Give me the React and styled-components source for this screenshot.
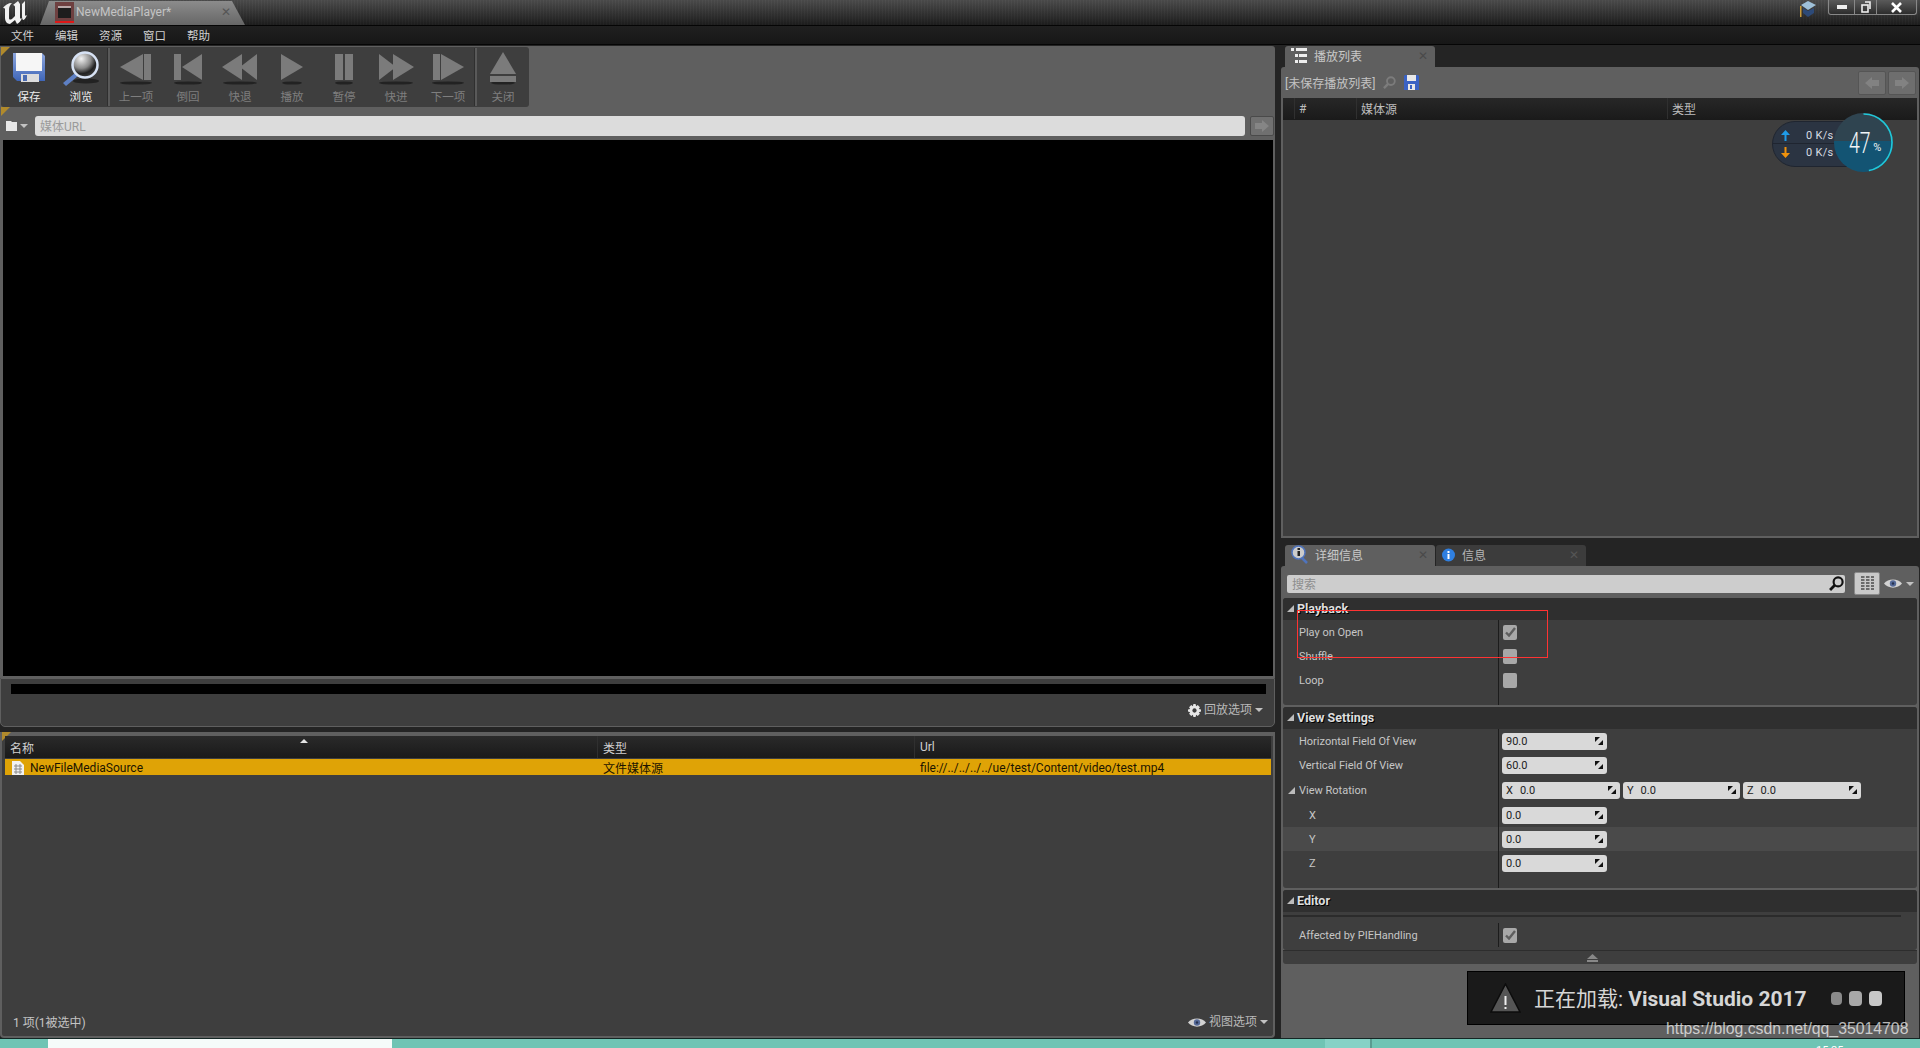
import styled, { createGlobalStyle } from 'styled-components'

const GlobalStyle = createGlobalStyle`
    html, body {
        margin: 0;
        padding: 0;
        background: #242424;
        font-family: Roboto, "Noto Sans CJK SC", sans-serif;
        overflow: hidden;
    }
    * { box-sizing: border-box; }
`

const Page = styled.div`
    position: relative;
    width: 1920px;
    height: 1048px;
    display: flex;
    flex-direction: column;
    overflow: hidden;
`

const TitleBar = styled.div`
    height: 26px;
    flex: none;
    display: flex;
    align-items: flex-end;
    padding-left: 2px;
    background: repeating-linear-gradient(90deg, #ffffff05 0 1px, #00000008 1px 3px), linear-gradient(#4c4c4c, #1d1d1d);
    border-bottom: 1px solid #050505;
`

const LogoBox = styled.div`
    width: 35px;
    height: 25px;
    flex: none;
`

const DocTab = styled.div`
    width: 205px;
    height: 24px;
    margin-left: 3px;
    display: flex;
    align-items: center;
    padding: 0 14px 2px 15px;
    gap: 2px;
    color: #c4c4c4;
    font-size: 12px;
    background: linear-gradient(#8c8c8c, #666);
    clip-path: polygon(9px 0, 192px 0, 205px 100%, 0 100%);
`

const TabName = styled.span`
    flex: 1;
`

const CloseMark = styled.span`
    color: ${(p) => p.$color || '#777'};
    font-size: 12px;
    line-height: 1;
`

const WindowButtons = styled.div`
    margin-left: auto;
    align-self: flex-start;
    display: flex;
    align-items: flex-start;
    gap: 12px;
    padding-right: 3px;
`

const WinGroup = styled.div`
    display: flex;
    height: 15px;
    border: 1px solid #888;
    border-top: 0;
    border-radius: 0 0 3px 3px;
    background: linear-gradient(#5a5a5a, #2d2d2d);
`

const WinButton = styled.div`
    width: ${(p) => p.$w}px;
    display: flex;
    align-items: center;
    justify-content: center;
    border-left: ${(p) => (p.$first ? 0 : '1px solid #888')};
`

const MenuBar = styled.div`
    height: 19px;
    flex: none;
    display: flex;
    align-items: center;
    padding: 0 0 1px 11px;
    gap: 21px;
    color: #cfcfcf;
    font-size: 11.5px;
    background: linear-gradient(#202020, #171717);
    border-bottom: 1px solid #050505;
`

const Workspace = styled.div`
    height: 993px;
    flex: none;
    display: flex;
    gap: 6px;
    background: #242424;
`

const LeftColumn = styled.div`
    width: 1275px;
    flex: none;
    display: flex;
    flex-direction: column;
`

const PlayerArea = styled.div`
    height: 632px;
    flex: none;
    margin-top: 1px;
    padding: 1px 1px 0 1px;
    display: flex;
    flex-direction: column;
    background: #5f5f5f;
    border-radius: 0 3px 0 0;
`

const Corner = styled.i`
    position: absolute;
    top: 0;
    left: 0;
    width: 0;
    height: 0;
    border-top: 9px solid #b08a2c;
    border-right: 9px solid transparent;
`

const Toolbar = styled.div`
    position: relative;
    width: 528px;
    height: 60px;
    flex: none;
    display: flex;
    padding-left: 2px;
    background: #3e3e3e;
    border-radius: 3px;
`

const ToolButton = styled.div`
    width: 52px;
    flex: none;
    display: flex;
    flex-direction: column;
    align-items: center;
    padding-top: 5px;
    gap: 5px;
    font-size: 11.5px;
    line-height: 14px;
    color: ${(p) => (p.$active ? '#ececec' : '#7e7e7e')};
`

const ToolIcon = styled.div`
    height: 33px;
    display: flex;
    align-items: center;
    justify-content: center;
`

const ToolDivider = styled.div`
    width: 3px;
    flex: none;
    margin: 1px 0;
    background: #595959;
    border-left: 1px solid #2f2f2f;
`

const UrlRow = styled.div`
    position: relative;
    height: 33px;
    flex: none;
    padding: 9px 0 4px 2px;
    display: flex;
    align-items: stretch;
    gap: 5px;
`

const FolderBtn = styled.div`
    width: 27px;
    flex: none;
    display: flex;
    align-items: center;
    gap: 2px;
    padding-left: 3px;
`

const Caret = styled.span`
    width: 0;
    height: 0;
    flex: none;
    border-left: 4px solid transparent;
    border-right: 4px solid transparent;
    border-top: 4px solid #c2c2c2;
`

const UrlInput = styled.div`
    flex: 1;
    display: flex;
    align-items: center;
    padding: 0 0 2px 5px;
    font-size: 12px;
    color: #9a9a9a;
    background: #dcdcdc;
    border-radius: 3px;
`

const GoButton = styled.div`
    width: 24px;
    flex: none;
    display: flex;
    align-items: center;
    justify-content: center;
    background: #707070;
    border: 1px solid #4a4a4a;
    border-radius: 2px;
`

const Video = styled.div`
    height: 536px;
    flex: none;
    margin-left: 2px;
    margin-right: 1px;
    background: #000;
`

const SeekPanel = styled.div`
    height: 49px;
    flex: none;
    padding: 5px 8px 0 10px;
    background: #3e3e3e;
    border: 1px solid #5f5f5f;
    border-radius: 0 0 5px 5px;
`

const SeekBar = styled.div`
    height: 10px;
    background: #000;
`

const OptionLink = styled.div`
    display: flex;
    justify-content: flex-end;
    align-items: center;
    gap: 3px;
    padding-right: ${(p) => p.$pr || 0}px;
    font-size: 12px;
    line-height: 14px;
    color: #b9b9b9;
`

const SeekOptions = styled(OptionLink)`
    margin-top: 9px;
`

const ListPanel = styled.div`
    position: relative;
    height: 306px;
    flex: none;
    margin-top: 5px;
    padding: 4px 2px 2px 3px;
    display: flex;
    flex-direction: column;
    background: #3e3e3e;
    border: 2px solid #5f5f5f;
    border-top: 0;
    border-radius: 0 0 4px 4px;
    box-shadow: inset 0 4px 0 #5f5f5f;
`

const ListHeader = styled.div`
    position: relative;
    height: 22px;
    flex: none;
    display: grid;
    grid-template-columns: 592px 317px 1fr;
    background: linear-gradient(#2a2a2a, #1a1a1a);
    font-size: 12px;
    color: #d0d0d0;
`

const HeaderCell = styled.div`
    display: flex;
    align-items: center;
    padding-left: ${(p) => p.$pl || 5}px;
    border-left: ${(p) => (p.$first ? 0 : '1px solid #303030')};
`

const SortMark = styled.i`
    position: absolute;
    left: 295px;
    top: 3px;
    width: 0;
    height: 0;
    border-left: 4px solid transparent;
    border-right: 4px solid transparent;
    border-bottom: 4px solid #e4e4e4;
`

const SelectedRow = styled.div`
    height: 16px;
    flex: none;
    display: grid;
    grid-template-columns: 592px 317px 1fr;
    align-items: center;
    margin-top: 1px;
    padding-bottom: 1px;
    background: #dfa306;
    font-size: 12px;
    color: #1c1400;
`

const NameCell = styled.div`
    display: flex;
    align-items: center;
    gap: 6px;
    padding-left: 7px;
`

const RowCell = styled.div`
    padding-left: 6px;
`

const ListFooter = styled.div`
    margin-top: auto;
    height: 19px;
    display: flex;
    align-items: flex-start;
    justify-content: space-between;
    padding: 0 3px 0 8px;
    font-size: 12px;
    line-height: 16px;
    color: #c4c4c4;
`

const RightColumn = styled.div`
    flex: 1;
    display: flex;
    flex-direction: column;
    padding-top: 1px;
    padding-right: 1px;
`

const TabStrip = styled.div`
    height: 21px;
    flex: none;
    display: flex;
    gap: 1px;
    padding-left: 4px;
`

const DockTab = styled.div`
    width: 150px;
    display: flex;
    align-items: center;
    gap: 7px;
    padding: 0 7px 2px 6px;
    font-size: 12px;
    color: ${(p) => (p.$active ? '#c9c9c9' : '#b6b6b6')};
    background: ${(p) => (p.$active ? '#5f5f5f' : '#3c3c3c')};
    border-radius: 3px 3px 0 0;
`

const Panel = styled.div`
    background: #5f5f5f;
    border-radius: 3px 3px 0 0;
    padding: 0 2px 2px 2px;
    display: flex;
    flex-direction: column;
`

const PlaylistPanel = styled(Panel)`
    height: 471px;
    flex: none;
`

const PlaylistBar = styled.div`
    height: 31px;
    flex: none;
    display: flex;
    align-items: center;
    gap: 8px;
    padding: 0 1px 0 2px;
    font-size: 12px;
    color: #c4c4c4;
`

const NavGroup = styled.div`
    margin-left: auto;
    display: flex;
    gap: 2px;
`

const NavButton = styled.div`
    width: 28px;
    height: 24px;
    display: flex;
    align-items: center;
    justify-content: center;
    background: #6e6e6e;
    border: 1px solid #555;
    border-radius: 2px;
`

const PlaylistHeader = styled.div`
    height: 22px;
    flex: none;
    display: grid;
    grid-template-columns: 11px 62px 311px 1fr;
    padding-bottom: 1px;
    background: linear-gradient(#272727, #1a1a1a);
    font-size: 12px;
    color: #bdbdbd;
`

const PlaylistCell = styled.div`
    display: flex;
    align-items: center;
    padding-left: 4px;
    border-left: ${(p) => (p.$first ? 0 : '1px solid #303030')};
`

const PlaylistBody = styled.div`
    flex: 1;
    background: #3e3e3e;
`

const DetailsStrip = styled(TabStrip)`
    margin-top: 7px;
`

const DetailsPanel = styled(Panel)`
    flex: 1;
`

const SearchRow = styled.div`
    height: 32px;
    flex: none;
    display: flex;
    align-items: center;
    padding: 3px 0 0 4px;
`

const SearchInput = styled.div`
    width: 558px;
    height: 18px;
    display: flex;
    align-items: center;
    justify-content: space-between;
    padding: 0 1px 0 5px;
    font-size: 12px;
    color: #8e8e8e;
    background: #cdcdcd;
    border-radius: 2px;
`

const GridToggle = styled.div`
    width: 26px;
    height: 23px;
    flex: none;
    margin-left: 9px;
    display: flex;
    align-items: center;
    justify-content: center;
    background: #c9c9c9;
    border: 1px solid #8a8a8a;
    border-radius: 2px;
`

const EyeMenu = styled.div`
    display: flex;
    align-items: center;
    gap: 4px;
    margin-left: 4px;
`

const Section = styled.div`
    height: ${(p) => p.$h}px;
    flex: none;
    margin-bottom: 2px;
    display: flex;
    flex-direction: column;
    background: #3e3e3e;
    border-radius: 3px;
    overflow: hidden;
`

const SectionHeader = styled.div`
    height: 22px;
    flex: none;
    display: flex;
    align-items: center;
    gap: 3px;
    padding: 0 0 2px 4px;
    font-size: 12.5px;
    font-weight: 700;
    color: #dedede;
    text-shadow: 1px 1px 0 #000;
    background: #2f2f2f;
`

const Fold = styled.i`
    width: 0;
    height: 0;
    flex: none;
    border-left: 7px solid transparent;
    border-bottom: 7px solid #bcbcbc;
`

const Row = styled.div`
    height: ${(p) => p.$h || 24}px;
    flex: none;
    display: flex;
    align-items: center;
    background: ${(p) => (p.$stripe ? '#4a4a4a' : 'transparent')};
`

const RowLabel = styled.div`
    width: 216px;
    height: 100%;
    flex: none;
    display: flex;
    align-items: center;
    gap: 4px;
    padding-left: ${(p) => p.$pl || 16}px;
    font-size: 11px;
    color: #c6c6c6;
    border-right: 1px solid #1c1c1c;
`

const RowValue = styled.div`
    display: flex;
    align-items: center;
    gap: 3px;
    padding-left: 3px;
`

const CheckBox = styled.div`
    width: 14px;
    height: 15px;
    margin-left: 1px;
    display: flex;
    align-items: center;
    justify-content: center;
    background: #a8a8a8;
    border-radius: 2px;
`

const NumberInput = styled.div`
    width: ${(p) => p.$w || 105}px;
    height: 17px;
    display: flex;
    align-items: center;
    gap: 7px;
    padding: 0 4px;
    font-size: 11px;
    color: #222;
    background: #d9d9d9;
    border-radius: 3px;
`

const SpinIcon = styled.svg`
    margin-left: auto;
    flex: none;
`

const SectionRule = styled.div`
    height: 2px;
    flex: none;
    margin: 3px 16px 6px 0;
    background: #2b2b2b;
`

const CollapseStrip = styled.div`
    height: 14px;
    flex: none;
    display: flex;
    align-items: center;
    justify-content: center;
    padding-right: 16px;
    border-top: 1px solid #2d2d2d;
    background: #3e3e3e;
    border-radius: 0 0 3px 3px;
    margin-top: -2px;
`

const TaskStrip = styled.div`
    flex: 1;
    position: relative;
    overflow: hidden;
    background: #6fc4b4;
    border-top: 1px solid #142624;
`

const TaskWhite = styled.div`
    position: absolute;
    top: 0;
    bottom: 0;
    left: ${(p) => p.$l}px;
    width: ${(p) => p.$w}px;
    background: ${(p) => p.$c};
`

const Clock = styled.span`
    position: absolute;
    left: 1816px;
    top: 6px;
    font-size: 11px;
    line-height: 12px;
    color: #fff;
`

const RedMark = styled.div`
    position: absolute;
    left: 1297px;
    top: 610px;
    width: 251px;
    height: 48px;
    border: 1px solid #f33;
`

const Toast = styled.div`
    position: absolute;
    left: 1467px;
    top: 971px;
    width: 438px;
    height: 54px;
    display: flex;
    align-items: center;
    padding: 0 22px;
    gap: 13px;
    background: #1a1a1a;
    border: 1px solid #000;
    font-size: 21px;
    color: #d6d6d6;
`

const ToastText = styled.div`
    flex: 1;
    margin-bottom: 3px;
    white-space: nowrap;
`

const ToastStrong = styled.b`
    font-weight: 700;
`

const ToastDots = styled.div`
    display: flex;
    gap: 7px;
    align-items: center;
`

const ToastDot = styled.i`
    width: ${(p) => p.$s}px;
    height: ${(p) => p.$s + 2}px;
    border-radius: 4px;
    background: ${(p) => p.$c};
`

const Watermark = styled.div`
    position: absolute;
    left: 1666px;
    top: 1019px;
    font-family: "Liberation Sans", Arial, sans-serif;
    font-size: 15.8px;
    line-height: 20px;
    color: #ffffffb0;
    white-space: nowrap;
`

const NetWidget = styled.div`
    position: absolute;
    left: 1772px;
    top: 121px;
    width: 120px;
    height: 46px;
    padding-top: 5px;
    border-radius: 23px;
    background: #2b3442;
    border: 1px solid #1f2530;
    color: #d8dde2;
    font-size: 11px;
    letter-spacing: 0.3px;
`

const NetLine = styled.div`
    height: 17px;
    display: flex;
    align-items: center;
    padding-left: 8px;
    gap: 16px;
    border-bottom: ${(p) => (p.$top ? '1px solid #1f2530' : 0)};
`

const NetDial = styled.div`
    position: absolute;
    left: 61px;
    top: -9px;
    width: 59px;
    height: 59px;
    display: flex;
    align-items: center;
    justify-content: center;
    border-radius: 50%;
    background: linear-gradient(#2f4450 47%, #135473 47%);
    color: #f2f6f8;
`

const DialRing = styled.svg`
    position: absolute;
    inset: 0;
`

const DialNumber = styled.span`
    display: inline-block;
    width: 23px;
    margin-left: 4px;
    font-size: 30px;
    font-weight: 300;
    letter-spacing: 0;
    transform: scaleX(0.65);
    transform-origin: left center;
`

const DialPercent = styled.span`
    font-size: 11px;
    margin-top: 10px;
    margin-left: 1px;
`

const Logo = () => (
    <LogoBox>
        <svg width="26" height="24" viewBox="0 0 26 24" fill="#f1f1f1">
            <path d="M1 8 C3 5 6 3 10 3 C8 5 7 7 7 9 V18 C7 20 9 20 11 18 L13 16 V7 C13 6 12 5 11 5 L16 1 L18 4 V17 C18 19 19 19 20 18 C19 21 17 23 15 24 L13 20 L8 24 C5 24 3 21 3 18 V9 C3 8 2 8 1 8 Z" />
            <path d="M20 4 L23 1 V15 C23 16 24 16 25 15 C24 18 22 20 21 20 C20 19 20 17 20 15 Z" />
        </svg>
    </LogoBox>
)

const TabIcon = () => (
    <svg width="19" height="21" viewBox="0 0 19 21">
        <rect width="19" height="19" fill="#6e4040" />
        <rect x="3" y="4" width="13" height="2" fill="#b8a8a8" />
        <rect x="3" y="6" width="13" height="10" fill="#1d1d1d" />
        <rect y="19" width="19" height="2" fill="#e01818" />
    </svg>
)

const ToolShadow = ({ x = 14, w = 14 }) => <ellipse cx={x} cy="31" rx={w} ry="1.6" fill="#222" />

const SaveIcon = () => (
    <svg width="32" height="33" viewBox="0 0 32 33">
        <defs>
            <linearGradient id="flop" x1="0" y1="0" x2="0" y2="1">
                <stop offset="0" stopColor="#8da6dd" />
                <stop offset="1" stopColor="#3f66b8" />
            </linearGradient>
        </defs>
        <path d="M0 1 H29 L32 4 V29 H4 L0 25 Z" fill="url(#flop)" />
        <rect x="3" y="1" width="26" height="18" fill="#f6f6f6" />
        <rect x="8" y="22" width="18" height="8" fill="#dcdcdc" />
        <rect x="10" y="23" width="4" height="6" fill="#4a6bb2" />
    </svg>
)

const BrowseIcon = () => (
    <svg width="38" height="36" viewBox="0 0 38 36">
        <defs>
            <radialGradient id="glass" cx="0.35" cy="0.25" r="0.85">
                <stop offset="0" stopColor="#f2f2f2" />
                <stop offset="0.45" stopColor="#8a8a8a" />
                <stop offset="0.7" stopColor="#222" />
                <stop offset="1" stopColor="#4a4a4a" />
            </radialGradient>
        </defs>
        <ellipse cx="24" cy="30" rx="13" ry="2.5" fill="#222" />
        <path d="M13 22 L1 32 L4 35 L16 25 Z" fill="#5e80c4" />
        <circle cx="23" cy="14" r="12.5" fill="url(#glass)" stroke="#d7e2f4" strokeWidth="2.5" />
    </svg>
)

const Media = ({ children, w = 34 }) => (
    <svg width={w} height="33" viewBox={`0 0 ${w} 33`} fill="#7b7b7b">
        {children}
    </svg>
)

const mediaIcons = {
    prev: (
        <Media>
            <ToolShadow x={17} w={16} />
            <polygon points="1,15 24,2 24,28" />
            <rect x="25" y="2" width="7" height="26" />
        </Media>
    ),
    rewind: (
        <Media w={30}>
            <ToolShadow x={15} w={14} />
            <rect x="1" y="2" width="7" height="26" />
            <polygon points="9,15 29,2 29,28" />
        </Media>
    ),
    back: (
        <Media w={38}>
            <ToolShadow x={19} w={17} />
            <polygon points="1,15 21,2 21,28" />
            <polygon points="19,15 36,2 36,28" />
        </Media>
    ),
    play: (
        <Media w={24}>
            <ToolShadow x={12} w={10} />
            <polygon points="1,2 23,15 1,28" />
        </Media>
    ),
    pause: (
        <Media w={20}>
            <ToolShadow x={10} w={9} />
            <rect x="1" y="2" width="8" height="26" />
            <rect x="11" y="2" width="8" height="26" />
        </Media>
    ),
    forward: (
        <Media w={38}>
            <ToolShadow x={19} w={17} />
            <polygon points="2,2 19,15 2,28" />
            <polygon points="16,2 37,15 16,28" />
        </Media>
    ),
    next: (
        <Media>
            <ToolShadow x={17} w={16} />
            <rect x="2" y="2" width="7" height="26" />
            <polygon points="10,2 33,15 10,28" />
        </Media>
    ),
    eject: (
        <Media w={28}>
            <ToolShadow x={14} w={12} />
            <polygon points="14,0 27,22 1,22" />
            <rect x="1" y="24" width="26" height="6" />
        </Media>
    ),
}

const tools = [
    { key: 'prev', label: '上一项' },
    { key: 'rewind', label: '倒回' },
    { key: 'back', label: '快退' },
    { key: 'play', label: '播放' },
    { key: 'pause', label: '暂停' },
    { key: 'forward', label: '快进' },
    { key: 'next', label: '下一项' },
]

const FolderIcon = () => (
    <svg width="12" height="10" viewBox="0 0 12 10" fill="#e8e8e8">
        <path d="M0 0 H5 L6 1 H11 V10 H0 Z" />
    </svg>
)

const ArrowIcon = ({ right, color = '#828282', w = 18 }) => (
    <svg width={w} height="12" viewBox="0 0 14 12" fill={color}>
        {right ? (
            <polygon points="14,6 7,0 7,3 0,3 0,9 7,9 7,12" />
        ) : (
            <polygon points="0,6 7,0 7,3 14,3 14,9 7,9 7,12" />
        )}
    </svg>
)

const GearIcon = () => (
    <svg width="13" height="13" viewBox="0 0 24 24" fill="#e6e6e6">
        <path fillRule="evenodd" d="M10 0 h4 l1 4 3-2 4 4 -2 3 4 1 v4 l-4 1 2 3 -4 4 -3-2 -1 4 h-4 l-1-4 -3 2 -4-4 2-3 -4-1 v-4 l4-1 -2-3 4-4 3 2 Z M12 8 a4 4 0 1 0 .01 0 Z" />
    </svg>
)

const EyeIcon = ({ w = 18 }) => (
    <svg width={w} height="11" viewBox="0 0 18 11">
        <path d="M0 5.5 C4 0 14 0 18 5.5 C14 11 4 11 0 5.5 Z" fill="#d2d2d2" />
        <circle cx="9" cy="5.5" r="3.2" fill="#556a99" />
        <circle cx="9" cy="5.5" r="1.2" fill="#26324e" />
    </svg>
)

const SheetIcon = () => (
    <svg width="12" height="14" viewBox="0 0 12 14">
        <path d="M0 0 H8 L12 4 V14 H0 Z" fill="#f2f2f2" />
        <path d="M2 5 H10 M2 8 H10 M2 11 H10 M4 3 V13 M8 3 V13" stroke="#8a8a8a" strokeWidth="1" />
    </svg>
)

const OutlinerIcon = () => (
    <svg width="16" height="15" viewBox="0 0 16 15" fill="#eee">
        <rect x="0" y="0" width="3" height="3" />
        <rect x="5" y="0" width="11" height="3" />
        <rect x="4" y="6" width="3" height="3" />
        <rect x="8" y="6" width="8" height="3" />
        <rect x="4" y="12" width="3" height="3" />
        <rect x="8" y="12" width="8" height="3" />
    </svg>
)

const DetailsIcon = () => (
    <svg width="17" height="19" viewBox="0 0 17 19">
        <path d="M11 13 L16 18" stroke="#4f74bd" strokeWidth="2.5" />
        <circle cx="7.5" cy="7.5" r="6.5" fill="#ccc" stroke="#4f74bd" strokeWidth="1.5" />
        <rect x="6.5" y="6" width="2.5" height="5" fill="#222" />
        <rect x="6.5" y="3" width="2.5" height="2" fill="#222" />
    </svg>
)

const InfoIcon = () => (
    <svg width="13" height="14" viewBox="0 0 13 14">
        <circle cx="6.5" cy="7" r="6.5" fill="#2f7fe0" />
        <rect x="5.5" y="6" width="2" height="5" fill="#fff" />
        <rect x="5.5" y="3" width="2" height="2" fill="#fff" />
    </svg>
)

const SmallFloppy = () => (
    <svg width="15" height="15" viewBox="0 0 15 15">
        <path d="M1 0 H14 L15 1 V15 H0 V1 Z" fill="#3a62c4" />
        <rect x="3" y="0" width="9" height="6" fill="#e8e8e8" />
        <rect x="4" y="9" width="7" height="6" fill="#e8e8e8" />
        <rect x="6" y="10" width="2" height="4" fill="#3a62c4" />
    </svg>
)

const Lens = ({ color = '#7c7c7c', size = 13 }) => (
    <svg width={size} height={size} viewBox="0 0 14 14" fill="none" stroke={color} strokeWidth="2">
        <circle cx="8.5" cy="5.5" r="4.2" />
        <path d="M5.5 8.5 L1 13" strokeWidth="2.6" />
    </svg>
)

const Spin = () => (
    <SpinIcon width="8" height="8" viewBox="0 0 8 8">
        <polygon points="0,0 5,0 0,5" fill="#111" />
        <polygon points="8,8 3,8 8,3" fill="#111" />
    </SpinIcon>
)

const Check = () => (
    <svg width="11" height="10" viewBox="0 0 11 10">
        <path d="M1 5.5 L4 8.5 L10 1" fill="none" stroke="#5e5e5e" strokeWidth="2.4" />
    </svg>
)

const GridIcon = () => (
    <svg width="13" height="15" viewBox="0 0 13 15" fill="#6b6b6b">
        {[0, 3, 6, 9, 12].map((y) =>
            [0, 5, 10].map((x) => <rect key={`${x}-${y}`} x={x} y={y} width="3.5" height="2" />)
        )}
    </svg>
)

const WarnIcon = () => (
    <svg width="31" height="30" viewBox="0 0 31 30">
        <polygon points="15.5,1 30,29 1,29" fill="#555" stroke="#0c0c0c" strokeWidth="1.5" />
        <rect x="14.5" y="13" width="2" height="9" fill="#eee" />
        <rect x="14.5" y="24" width="2" height="2" fill="#eee" />
    </svg>
)

const CapIcon = () => (
    <svg width="17" height="18" viewBox="0 0 17 18">
        <polygon points="9,1 17,5 9,10 2,5" fill="#9fc0d8" />
        <polygon points="4,8 9,11 15,8 15,13 9,17 4,13" fill="#2d4a78" />
        <rect x="1" y="6" width="1.5" height="11" fill="#c79a3a" />
    </svg>
)

const NumberField = ({ axis, value, w }) => (
    <NumberInput $w={w}>
        {axis && <span>{axis}</span>}
        {value}
        <Spin />
    </NumberInput>
)

const App = () => (
    <Page>
        <GlobalStyle />
        <TitleBar>
            <Logo />
            <DocTab>
                <TabIcon />
                <TabName>NewMediaPlayer*</TabName>
                <CloseMark $color="#555">✕</CloseMark>
            </DocTab>
            <WindowButtons>
                <CapIcon />
                <WinGroup>
                    <WinButton $w={25} $first>
                        <svg width="10" height="4"><rect width="10" height="4" fill="#eee" /></svg>
                    </WinButton>
                    <WinButton $w={22}>
                        <svg width="10" height="12" viewBox="0 0 10 12" fill="none" stroke="#eee" strokeWidth="1.6">
                            <rect x="1" y="4" width="6" height="7" />
                            <path d="M4 1 H9 V8" />
                        </svg>
                    </WinButton>
                    <WinButton $w={40}>
                        <svg width="11" height="11" viewBox="0 0 11 11" stroke="#fff" strokeWidth="2.6">
                            <path d="M1 1 L10 10 M10 1 L1 10" />
                        </svg>
                    </WinButton>
                </WinGroup>
            </WindowButtons>
        </TitleBar>

        <MenuBar>
            {['文件', '编辑', '资源', '窗口', '帮助'].map((item) => (
                <span key={item}>{item}</span>
            ))}
        </MenuBar>

        <Workspace>
            <LeftColumn>
                <PlayerArea>
                    <Toolbar>
                        <Corner />
                        <ToolButton $active>
                            <ToolIcon><SaveIcon /></ToolIcon>
                            保存
                        </ToolButton>
                        <ToolButton $active>
                            <ToolIcon><BrowseIcon /></ToolIcon>
                            浏览
                        </ToolButton>
                        <ToolDivider />
                        {tools.map((tool) => (
                            <ToolButton key={tool.key}>
                                <ToolIcon>{mediaIcons[tool.key]}</ToolIcon>
                                {tool.label}
                            </ToolButton>
                        ))}
                        <ToolDivider />
                        <ToolButton>
                            <ToolIcon>{mediaIcons.eject}</ToolIcon>
                            关闭
                        </ToolButton>
                    </Toolbar>
                    <UrlRow>
                        <Corner />
                        <FolderBtn>
                            <FolderIcon />
                            <Caret />
                        </FolderBtn>
                        <UrlInput>媒体URL</UrlInput>
                        <GoButton><ArrowIcon right color="#858585" w={16} /></GoButton>
                    </UrlRow>
                    <Video />
                </PlayerArea>
                <SeekPanel>
                    <SeekBar />
                    <SeekOptions $pr={3}>
                        <GearIcon />
                        回放选项
                        <Caret />
                    </SeekOptions>
                </SeekPanel>
                <ListPanel>
                    <Corner />
                    <ListHeader>
                        <HeaderCell $first $pl={5}>名称</HeaderCell>
                        <HeaderCell>类型</HeaderCell>
                        <HeaderCell>Url</HeaderCell>
                        <SortMark />
                    </ListHeader>
                    <SelectedRow>
                        <NameCell>
                            <SheetIcon />
                            NewFileMediaSource
                        </NameCell>
                        <RowCell>文件媒体源</RowCell>
                        <RowCell>file://../../../../ue/test/Content/video/test.mp4</RowCell>
                    </SelectedRow>
                    <ListFooter>
                        <span>1 项(1被选中)</span>
                        <OptionLink>
                            <EyeIcon />
                            视图选项
                            <Caret />
                        </OptionLink>
                    </ListFooter>
                </ListPanel>
            </LeftColumn>

            <RightColumn>
                <TabStrip>
                    <DockTab $active>
                        <OutlinerIcon />
                        <TabName>播放列表</TabName>
                        <CloseMark $color="#4a4a4a">✕</CloseMark>
                    </DockTab>
                </TabStrip>
                <PlaylistPanel>
                    <PlaylistBar>
                        [未保存播放列表]
                        <Lens />
                        <SmallFloppy />
                        <NavGroup>
                            <NavButton><ArrowIcon /></NavButton>
                            <NavButton><ArrowIcon right /></NavButton>
                        </NavGroup>
                    </PlaylistBar>
                    <PlaylistHeader>
                        <PlaylistCell $first />
                        <PlaylistCell>#</PlaylistCell>
                        <PlaylistCell>媒体源</PlaylistCell>
                        <PlaylistCell>类型</PlaylistCell>
                    </PlaylistHeader>
                    <PlaylistBody />
                </PlaylistPanel>

                <DetailsStrip>
                    <DockTab $active>
                        <DetailsIcon />
                        <TabName>详细信息</TabName>
                        <CloseMark $color="#4a4a4a">✕</CloseMark>
                    </DockTab>
                    <DockTab>
                        <InfoIcon />
                        <TabName>信息</TabName>
                        <CloseMark $color="#555">✕</CloseMark>
                    </DockTab>
                </DetailsStrip>
                <DetailsPanel>
                    <SearchRow>
                        <SearchInput>
                            搜索
                            <Lens color="#111" size={15} />
                        </SearchInput>
                        <GridToggle><GridIcon /></GridToggle>
                        <EyeMenu>
                            <EyeIcon />
                            <Caret />
                        </EyeMenu>
                    </SearchRow>

                    <Section $h={107}>
                        <SectionHeader><Fold />Playback</SectionHeader>
                        <Row><RowLabel>Play on Open</RowLabel><RowValue><CheckBox><Check /></CheckBox></RowValue></Row>
                        <Row><RowLabel>Shuffle</RowLabel><RowValue><CheckBox /></RowValue></Row>
                        <Row><RowLabel>Loop</RowLabel><RowValue><CheckBox /></RowValue></Row>
                        <Row $h={13}><RowLabel /></Row>
                    </Section>

                    <Section $h={181}>
                        <SectionHeader><Fold />View Settings</SectionHeader>
                        <Row><RowLabel>Horizontal Field Of View</RowLabel><RowValue><NumberField value="90.0" /></RowValue></Row>
                        <Row><RowLabel>Vertical Field Of View</RowLabel><RowValue><NumberField value="60.0" /></RowValue></Row>
                        <Row $h={26}>
                            <RowLabel $pl={5}><Fold />View Rotation</RowLabel>
                            <RowValue>
                                <NumberField axis="X" value="0.0" w={118} />
                                <NumberField axis="Y" value="0.0" w={117} />
                                <NumberField axis="Z" value="0.0" w={118} />
                            </RowValue>
                        </Row>
                        <Row><RowLabel $pl={26}>X</RowLabel><RowValue><NumberField value="0.0" /></RowValue></Row>
                        <Row $stripe><RowLabel $pl={26}>Y</RowLabel><RowValue><NumberField value="0.0" /></RowValue></Row>
                        <Row><RowLabel $pl={26}>Z</RowLabel><RowValue><NumberField value="0.0" /></RowValue></Row>
                        <Row $h={13}><RowLabel /></Row>
                    </Section>

                    <Section $h={60}>
                        <SectionHeader><Fold />Editor</SectionHeader>
                        <SectionRule />
                        <Row><RowLabel>Affected by PIEHandling</RowLabel><RowValue><CheckBox><Check /></CheckBox></RowValue></Row>
                    </Section>
                    <CollapseStrip>
                        <svg width="11" height="8" viewBox="0 0 11 8" fill="#888">
                            <polygon points="5.5,0 11,5 0,5" />
                            <rect y="6" width="11" height="2" />
                        </svg>
                    </CollapseStrip>
                </DetailsPanel>
            </RightColumn>
        </Workspace>

        <TaskStrip>
            <TaskWhite $l={48} $w={344} $c="#f5fbfa" />
            <TaskWhite $l={1325} $w={45} $c="#86d2c6" />
            <TaskWhite $l={1370} $w={2} $c="#5a9c91" />
            <Clock>15:25</Clock>
        </TaskStrip>

        <NetWidget>
            <NetLine $top>
                <svg width="9" height="11" viewBox="0 0 9 11" fill="#1f9be8"><polygon points="4.5,0 9,5 5.5,5 5.5,11 3.5,11 3.5,5 0,5" /></svg>
                <span>0 K/s</span>
            </NetLine>
            <NetLine>
                <svg width="9" height="11" viewBox="0 0 9 11" fill="#f0920c"><polygon points="4.5,11 9,6 5.5,6 5.5,0 3.5,0 3.5,6 0,6" /></svg>
                <span>0 K/s</span>
            </NetLine>
            <NetDial>
                <DialRing width="59" height="59" viewBox="0 0 59 59">
                    <circle cx="29.5" cy="29.5" r="28.5" fill="none" stroke="#21c8d8" strokeWidth="1.6" strokeDasharray="84 200" transform="rotate(-90 29.5 29.5)" />
                </DialRing>
                <DialNumber>47</DialNumber>
                <DialPercent>%</DialPercent>
            </NetDial>
        </NetWidget>

        <RedMark />

        <Toast>
            <WarnIcon />
            <ToastText>正在加载: <ToastStrong>Visual Studio 2017</ToastStrong></ToastText>
            <ToastDots>
                <ToastDot $s={11} $c="#8a8a8a" />
                <ToastDot $s={13} $c="#a8a8a8" />
                <ToastDot $s={13} $c="#c8c8c8" />
            </ToastDots>
        </Toast>
        <Watermark>https://blog.csdn.net/qq_35014708</Watermark>
    </Page>
)

export default App
